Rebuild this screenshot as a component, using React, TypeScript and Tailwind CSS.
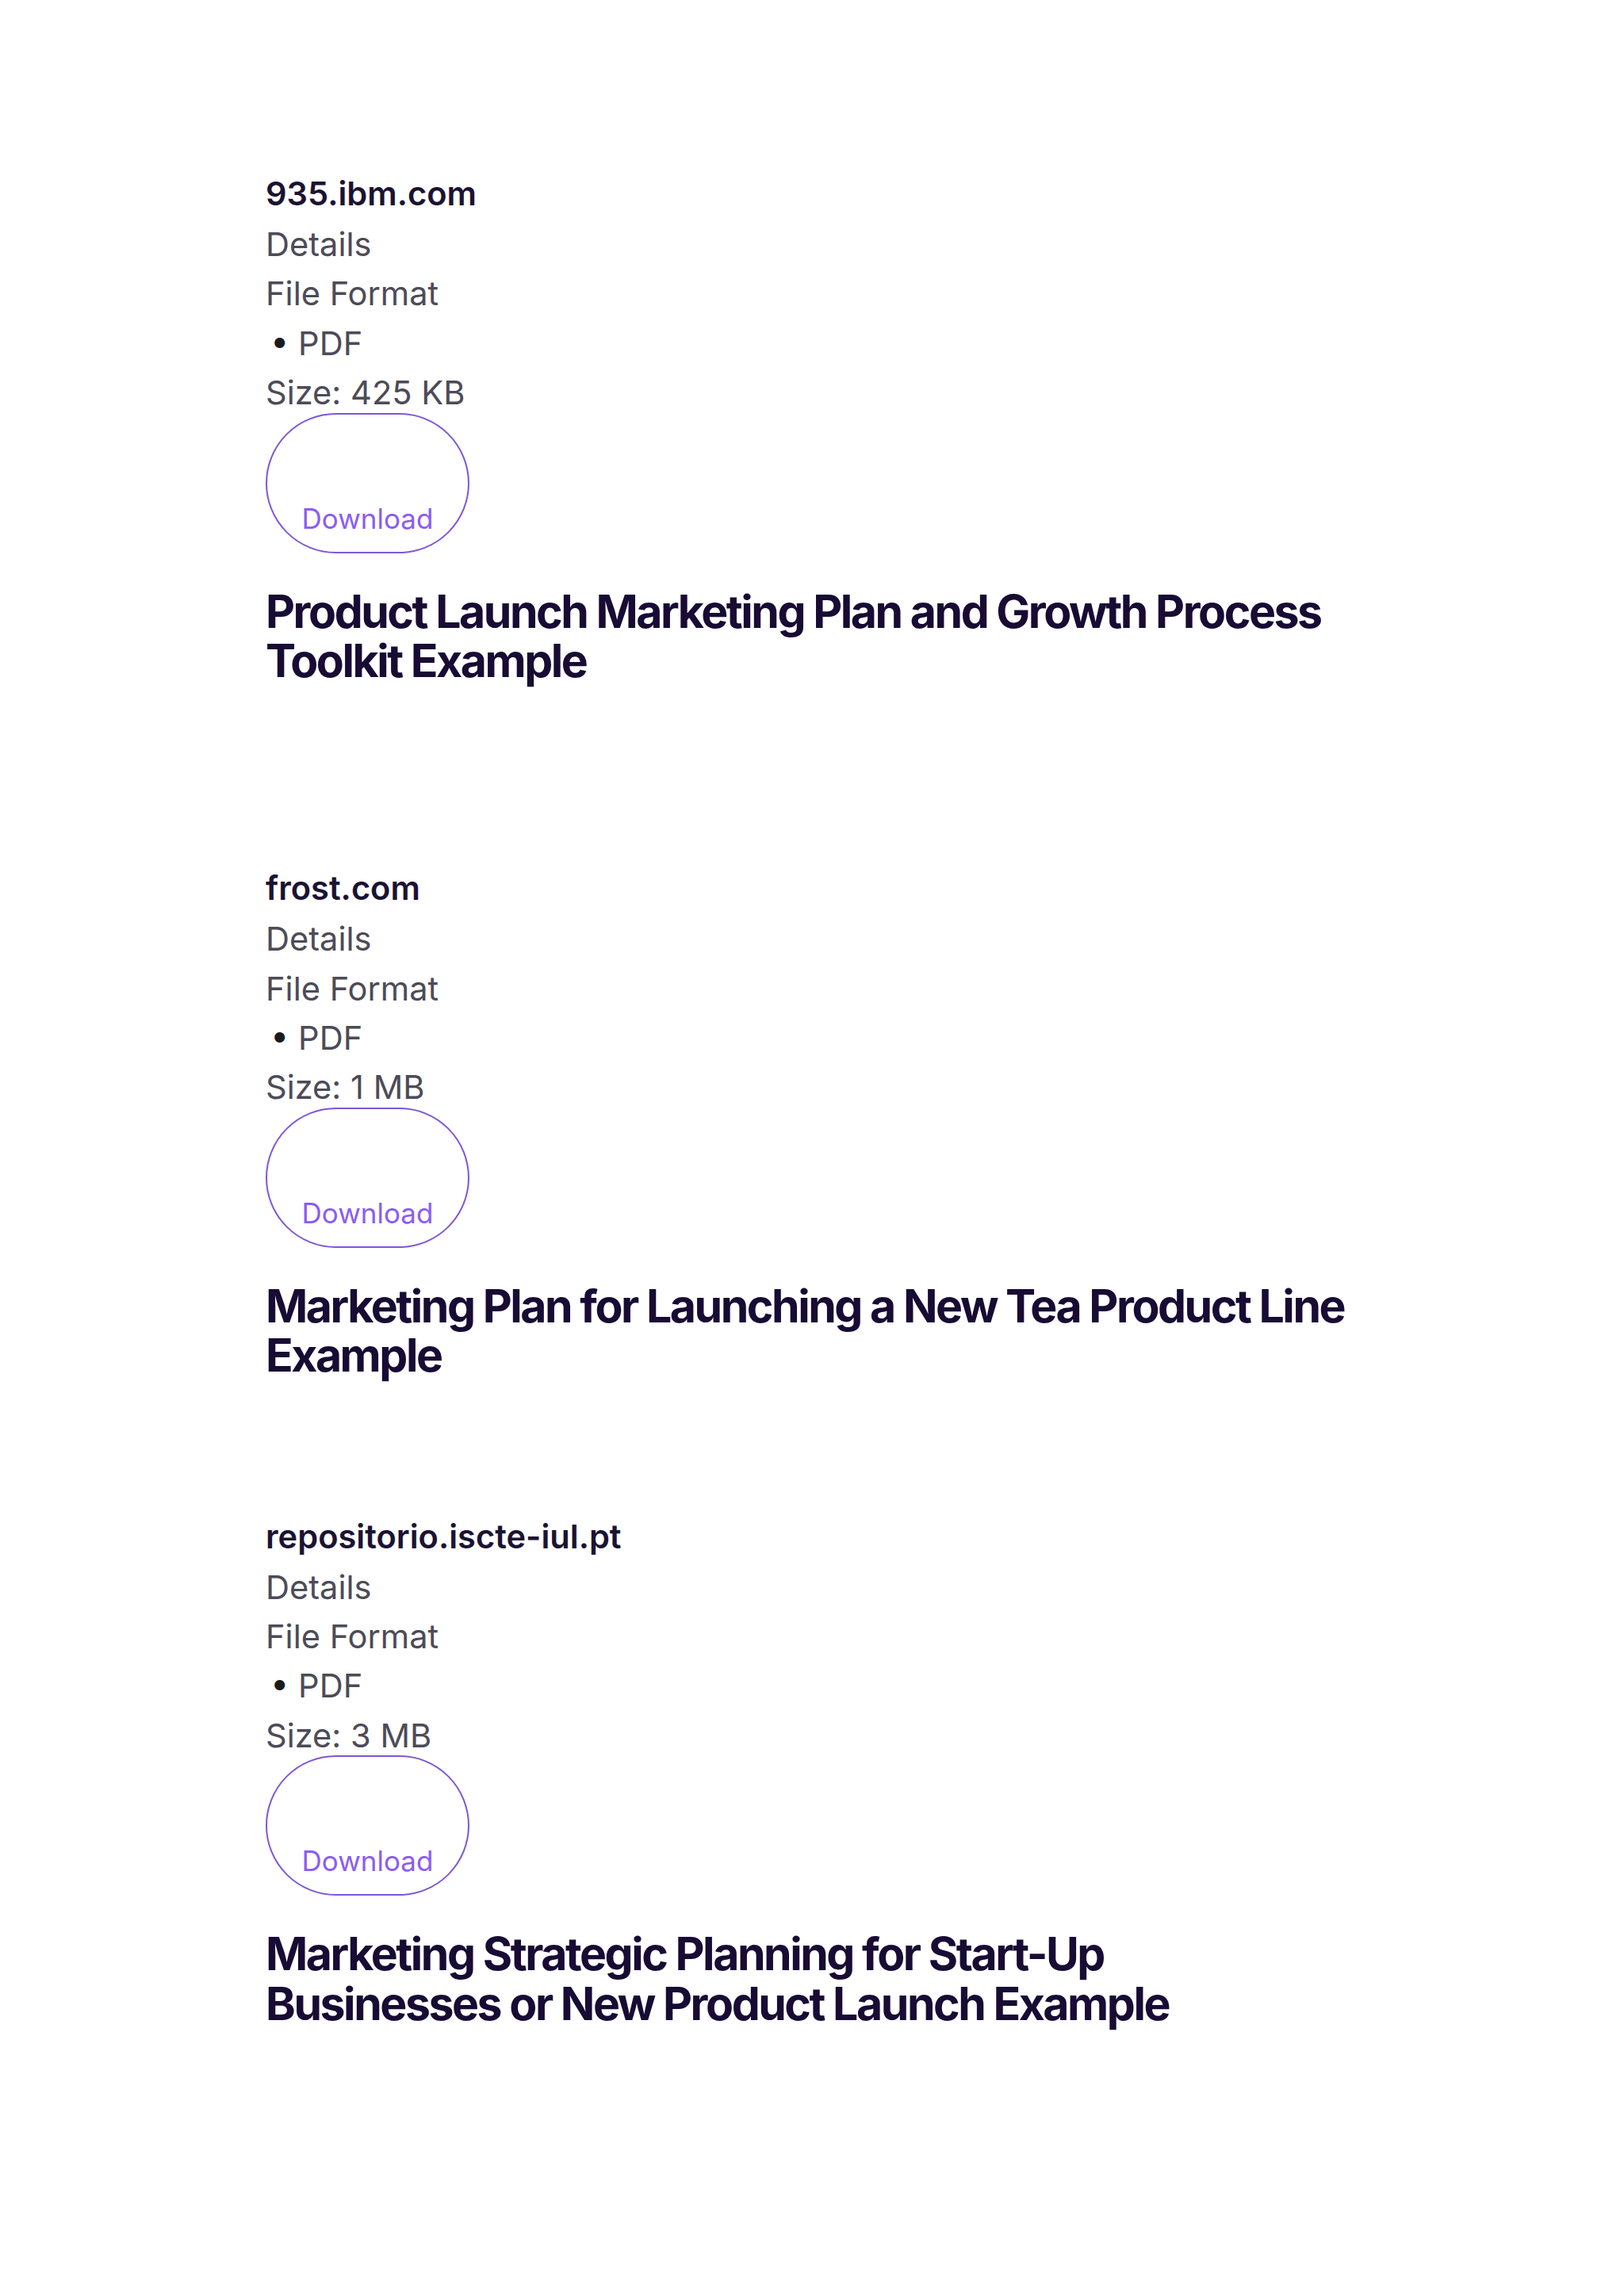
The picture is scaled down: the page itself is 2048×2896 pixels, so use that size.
const docs = [
  {
    source: "935.ibm.com",
    size: "425 KB",
    title: ["Product Launch Marketing Plan and Growth Process", "Toolkit Example"],
    spacing: "mb-[224px]",
  },
  {
    source: "frost.com",
    size: "1 MB",
    title: ["Marketing Plan for Launching a New Tea Product Line", "Example"],
    spacing: "mb-[165px]",
  },
  {
    source: "repositorio.iscte-iul.pt",
    size: "3 MB",
    title: ["Marketing Strategic Planning for Start-Up", "Businesses or New Product Launch Example"],
    spacing: "mb-0",
  },
];

function DocItem({ source, size, title, spacing }: (typeof docs)[number]) {
  return (
    <div className={`flex flex-col items-start ${spacing}`}>
      {/* Source */}
      <div className="text-[41.6px] leading-[62.4px] font-semibold text-[#1b1333] mb-[1.5px]">{source}</div>

      {/* Details */}
      <div className="text-[41.6px] leading-[62.4px] text-[#4d4b57]">
        <div>Details</div>
        <div>File Format</div>
        <div className="pl-[6px]">
          <span className="text-[#1b1b1f]">•</span> PDF
        </div>
        <div>Size: {size}</div>
      </div>

      {/* Button */}
      <button className="-mt-[6px] w-[257px] h-[177px] rounded-full border-[2.6px] border-[#7f56d9] flex flex-col items-center justify-end pb-[16px] bg-white">
        <span className="text-[35px] leading-[52px] text-[#8b5cf6]">Download</span>
      </button>

      {/* Title */}
      <h2 className="mt-[43px] text-[57.2px] leading-[62.4px] font-bold tracking-[-0.043em] text-[#180b34]">
        {title.map((line) => (
          <span key={line} className="block">
            {line}
          </span>
        ))}
      </h2>
    </div>
  );
}

export default function App() {
  return (
    <div className="min-h-screen bg-white pt-[213px] pl-[335px] font-['Inter',sans-serif]">
      {docs.map((d) => (
        <DocItem key={d.source} {...d} />
      ))}
    </div>
  );
}
